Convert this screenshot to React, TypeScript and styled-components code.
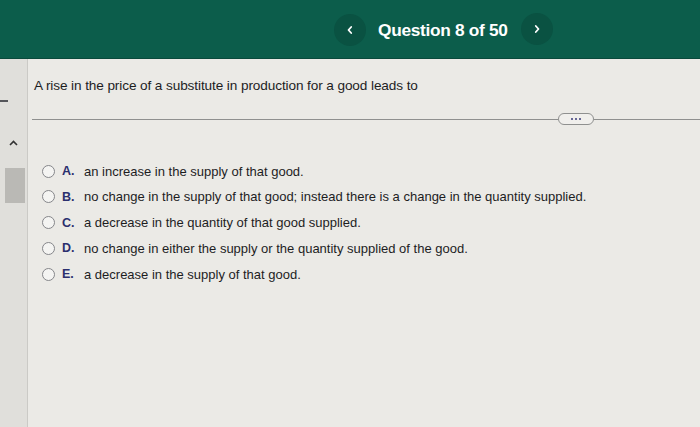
import React from 'react';
import styled, { createGlobalStyle } from 'styled-components';

const GlobalStyle = createGlobalStyle`
  html, body {
    margin: 0;
    padding: 0;
    background: #ebeae6;
    font-family: "Liberation Sans", Arial, sans-serif;
  }
`;

const Page = styled.div`
  width: 700px;
  height: 427px;
  display: flex;
  flex-direction: column;
  overflow: hidden;
`;

const Header = styled.header`
  height: 59px;
  flex-shrink: 0;
  background: #0c5d4b;
  display: flex;
  align-items: center;
  padding-left: 334px;
  box-sizing: border-box;
  border-bottom: 1px solid #0a4a3c;
`;

const NavButton = styled.button<{ $nudge?: number }>`
  width: 32px;
  height: 32px;
  border-radius: 50%;
  border: none;
  background: #0a5242;
  color: #fff;
  display: flex;
  align-items: center;
  justify-content: center;
  padding: 0;
  margin-top: ${(p) => p.$nudge ?? 0}px;
`;

const Title = styled.h1`
  margin: 2px 13px 0 12px;
  font-size: 17.3px;
  font-weight: bold;
  color: #fff;
  letter-spacing: -0.3px;
`;

const Body = styled.div`
  flex: 1;
  display: flex;
`;

const Sidebar = styled.aside`
  width: 27px;
  flex-shrink: 0;
  background: #e0dfdb;
  border-right: 1px solid #cbcac6;
  display: flex;
  flex-direction: column;
  align-items: flex-start;
`;

const Dash = styled.div`
  width: 8px;
  height: 2px;
  background: #55565a;
  margin-top: 41px;
`;

const Caret = styled.div`
  margin: 38px 0 0 9px;
  height: 10px;
  display: flex;
`;

const Thumb = styled.div`
  width: 20px;
  height: 35px;
  margin: 18px 0 0 5px;
  background: #bab9b5;
`;

const Main = styled.main`
  flex: 1;
  padding: 19px 0 0 6px;
`;

const Question = styled.p`
  margin: 0;
  font-size: 13.6px;
  color: #1d1d1f;
  letter-spacing: -0.1px;
`;

const DividerRow = styled.div`
  display: flex;
  align-items: center;
  margin: 20px 0 0 -2px;
`;

const Rule = styled.div<{ $w?: number }>`
  height: 1px;
  background: #8f908f;
  flex: ${(p) => (p.$w ? `0 0 ${p.$w}px` : '1')};
`;

const More = styled.div`
  width: 34px;
  height: 10px;
  border: 1px solid #8f908f;
  border-radius: 6px;
  display: flex;
  align-items: center;
  justify-content: center;
  gap: 2px;
  background: #f0efec;
`;

const Dot = styled.span`
  width: 2px;
  height: 2px;
  border-radius: 50%;
  background: #3a3a7a;
`;

const Options = styled.ul`
  list-style: none;
  margin: 37px 0 0 0;
  padding: 0 0 0 8px;
  display: flex;
  flex-direction: column;
  gap: 7.8px;
`;

const Option = styled.li`
  display: flex;
  align-items: center;
  height: 18px;
  font-size: 13px;
  color: #1d1d1f;
`;

const Radio = styled.span`
  width: 11px;
  height: 11px;
  border-radius: 50%;
  border: 1.5px solid #85868a;
  background: #f4f4f2;
  flex-shrink: 0;
  margin-right: 7px;
`;

const Letter = styled.span`
  font-weight: bold;
  color: #2b2f6e;
  width: 22px;
  font-size: 12.5px;
`;

const options = [
  { key: 'A', text: 'an increase in the supply of that good.' },
  {
    key: 'B',
    text: 'no change in the supply of that good; instead there is a change in the quantity supplied.',
  },
  { key: 'C', text: 'a decrease in the quantity of that good supplied.' },
  { key: 'D', text: 'no change in either the supply or the quantity supplied of the good.' },
  { key: 'E', text: 'a decrease in the supply of that good.' },
];

const Chevron = ({ dir }: { dir: 'left' | 'right' }) => (
  <svg width="10" height="10" viewBox="0 0 10 10">
    <path
      d={dir === 'left' ? 'M6.2 2 L3.5 5 L6.2 8' : 'M3.8 2 L6.5 5 L3.8 8'}
      stroke="#fff"
      strokeWidth="1.8"
      fill="none"
      strokeLinecap="round"
      strokeLinejoin="round"
    />
  </svg>
);

export default function App() {
  return (
    <Page>
      <GlobalStyle />
      <Header>
        <NavButton $nudge={2} aria-label="Previous">
          <Chevron dir="left" />
        </NavButton>
        <Title>Question 8 of 50</Title>
        <NavButton aria-label="Next">
          <Chevron dir="right" />
        </NavButton>
      </Header>
      <Body>
        <Sidebar>
          <Dash />
          <Caret>
            <svg width="9" height="6" viewBox="0 0 9 6">
              <path d="M1 5 L4.5 1.5 L8 5" stroke="#333" strokeWidth="1.6" fill="none" />
            </svg>
          </Caret>
          <Thumb />
        </Sidebar>
        <Main>
          <Question>A rise in the price of a substitute in production for a good leads to</Question>
          <DividerRow>
            <Rule $w={526} />
            <More>
              <Dot />
              <Dot />
              <Dot />
            </More>
            <Rule />
          </DividerRow>
          <Options>
            {options.map((o) => (
              <Option key={o.key}>
                <Radio />
                <Letter>{o.key}.</Letter>
                {o.text}
              </Option>
            ))}
          </Options>
        </Main>
      </Body>
    </Page>
  );
}
